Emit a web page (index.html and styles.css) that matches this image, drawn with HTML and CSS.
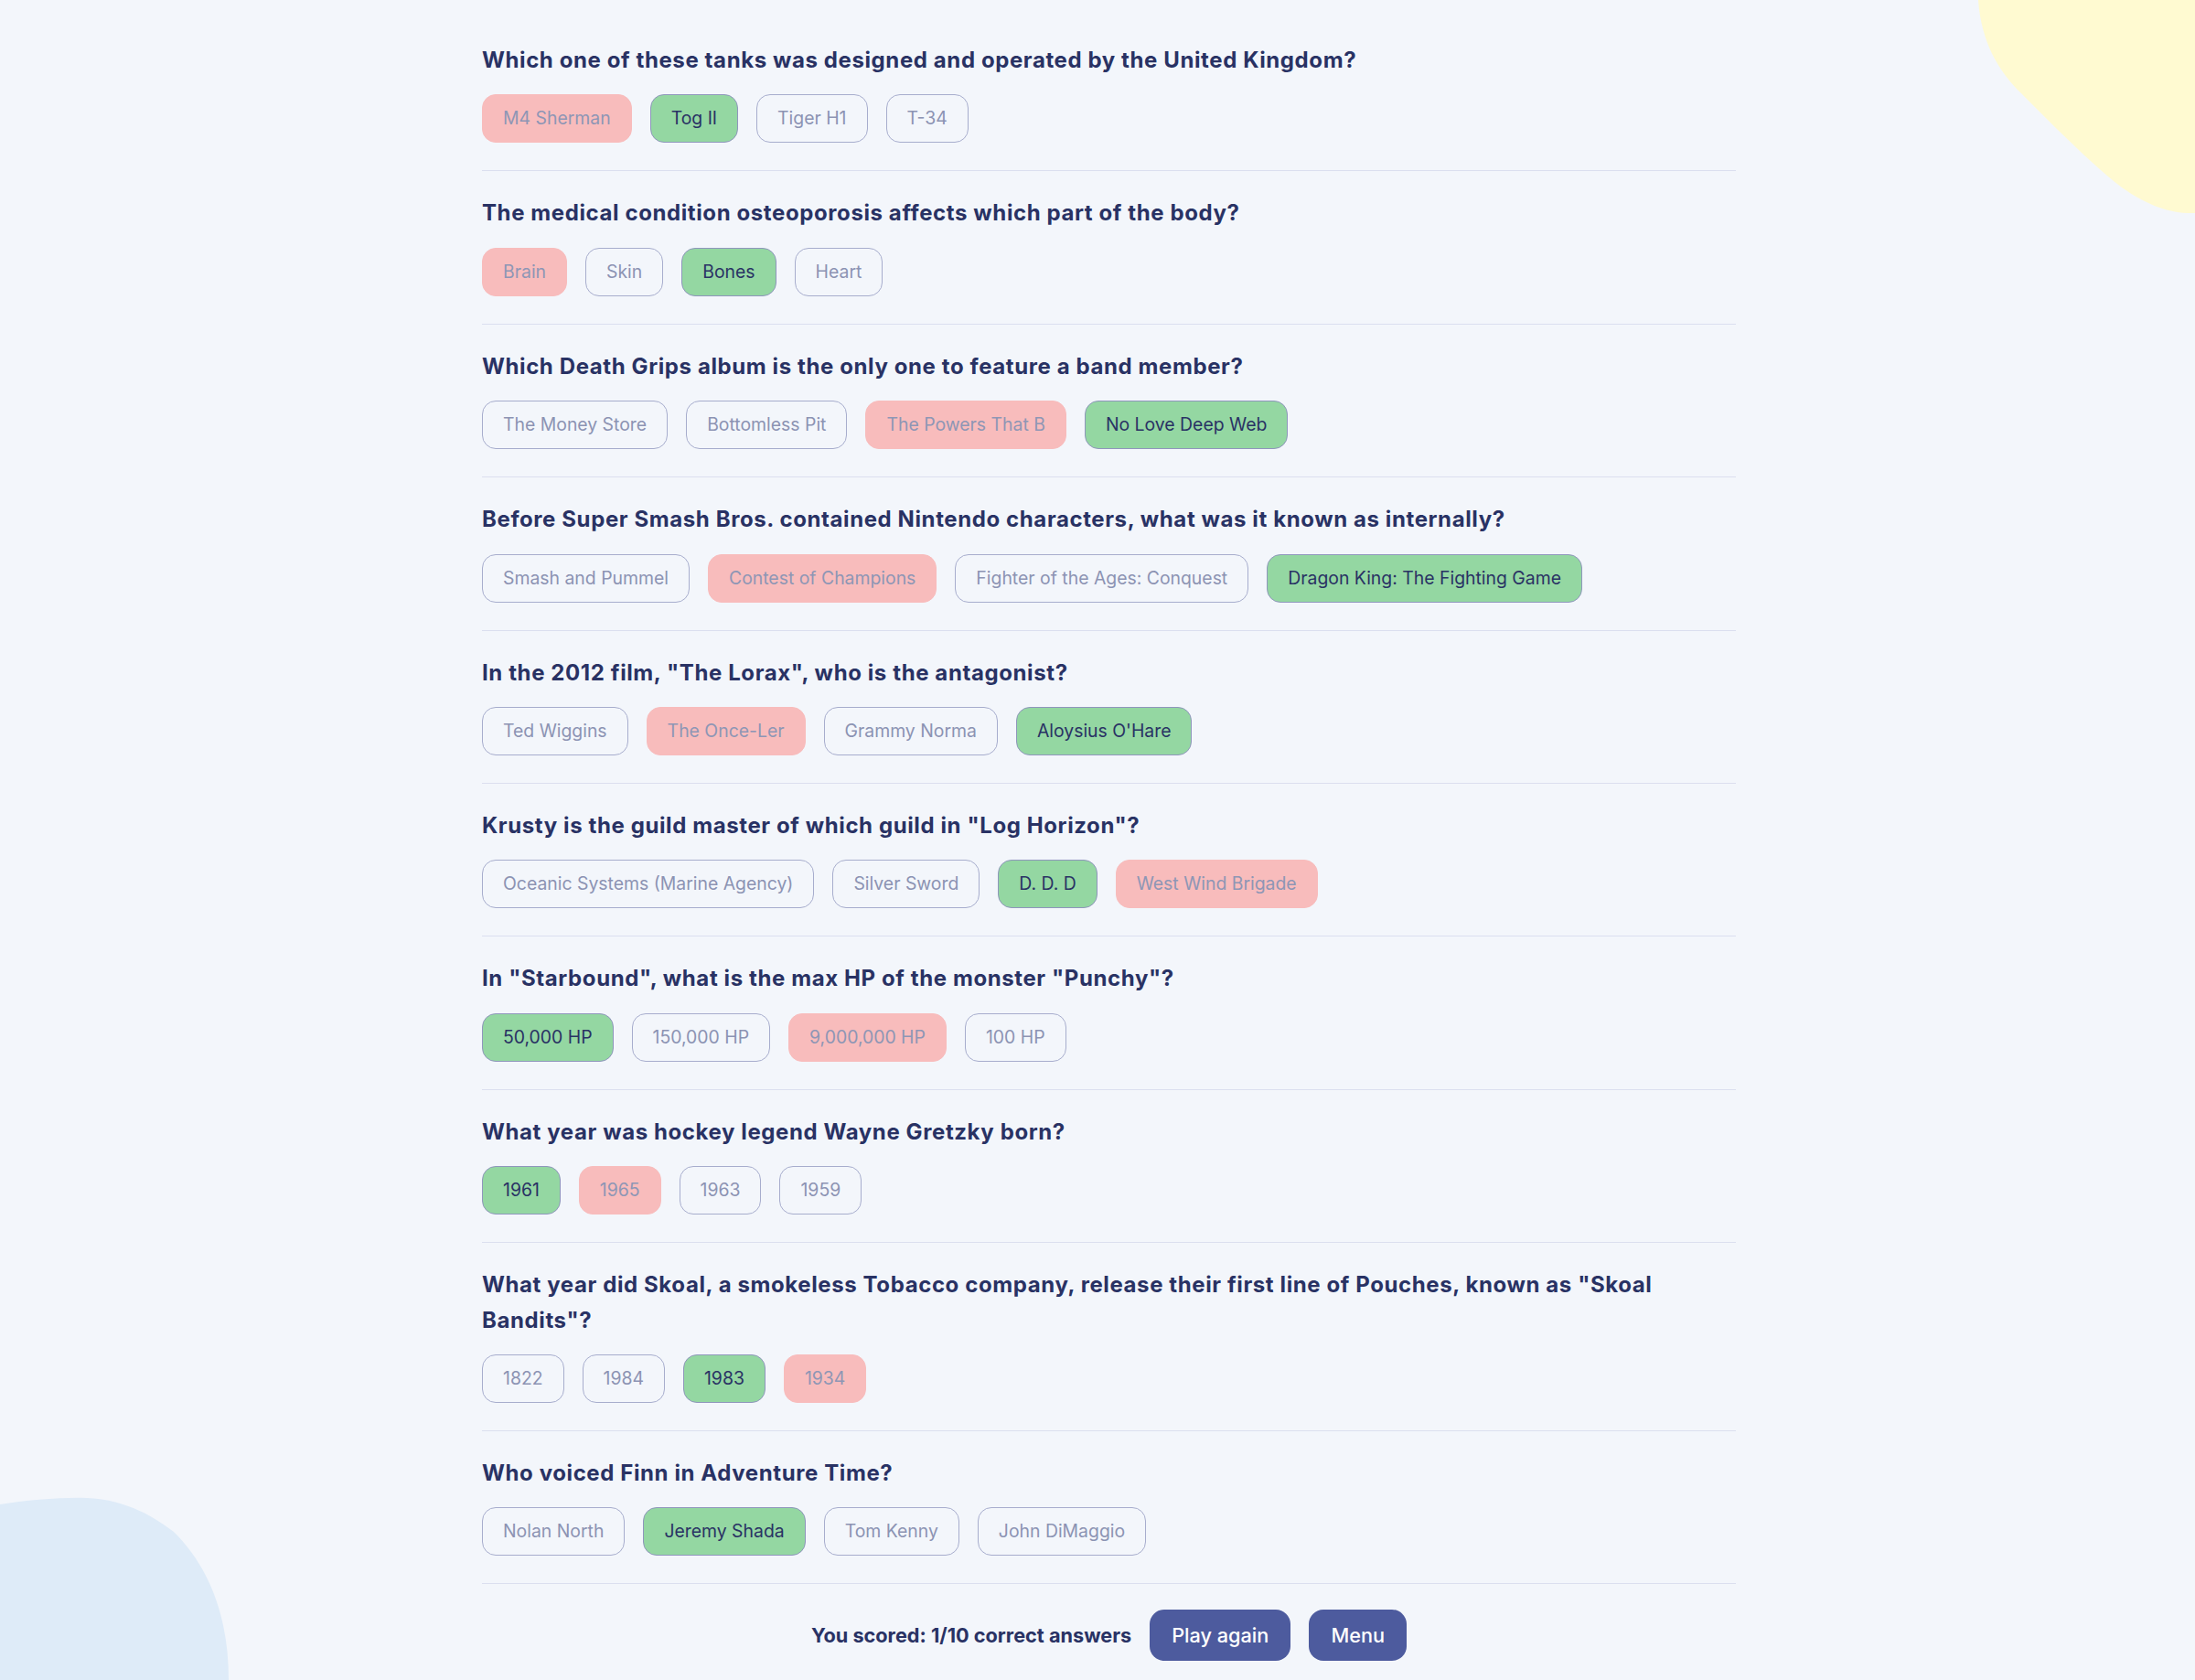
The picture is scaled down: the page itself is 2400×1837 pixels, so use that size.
FILE: index.html
```html
<!DOCTYPE html>
<html lang="en">
<head>
<meta charset="utf-8">
<title>Quizzical</title>
<link rel="stylesheet" href="styles.css">
</head>
<body>
<svg class="blob blob-yellow" width="240" height="240" viewBox="0 0 240 240" aria-hidden="true"><path d="M3 0 C6 45 25 78 50 102 C85 137 125 178 160 205 C190 226 215 234 240 233 L240 0 Z" fill="#FFFAD1"/></svg>
<svg class="blob blob-blue" width="260" height="207" viewBox="0 0 260 207" aria-hidden="true"><path d="M0 15 C30 10 70 7 95 8 C140 10 170 30 190 45 C230 85 250 140 250 207 L0 207 Z" fill="#DEEBF8"/></svg>
<div class="page">
<main class="quiz">
  <section class="question">
    <h2 class="q-text">Which one of these tanks was designed and operated by the United Kingdom?</h2>
    <div class="answers">
      <span class="answer wrong">M4 Sherman</span>
      <span class="answer correct">Tog II</span>
      <span class="answer">Tiger H1</span>
      <span class="answer">T-34</span>
    </div>
  </section>
  <section class="question">
    <h2 class="q-text">The medical condition osteoporosis affects which part of the body?</h2>
    <div class="answers">
      <span class="answer wrong">Brain</span>
      <span class="answer">Skin</span>
      <span class="answer correct">Bones</span>
      <span class="answer">Heart</span>
    </div>
  </section>
  <section class="question">
    <h2 class="q-text">Which Death Grips album is the only one to feature a band member?</h2>
    <div class="answers">
      <span class="answer">The Money Store</span>
      <span class="answer">Bottomless Pit</span>
      <span class="answer wrong">The Powers That B</span>
      <span class="answer correct">No Love Deep Web</span>
    </div>
  </section>
  <section class="question">
    <h2 class="q-text">Before Super Smash Bros. contained Nintendo characters, what was it known as internally?</h2>
    <div class="answers">
      <span class="answer">Smash and Pummel</span>
      <span class="answer wrong">Contest of Champions</span>
      <span class="answer">Fighter of the Ages: Conquest</span>
      <span class="answer correct">Dragon King: The Fighting Game</span>
    </div>
  </section>
  <section class="question">
    <h2 class="q-text">In the 2012 film, "The Lorax", who is the antagonist?</h2>
    <div class="answers">
      <span class="answer">Ted Wiggins</span>
      <span class="answer wrong">The Once-Ler</span>
      <span class="answer">Grammy Norma</span>
      <span class="answer correct">Aloysius O'Hare</span>
    </div>
  </section>
  <section class="question">
    <h2 class="q-text">Krusty is the guild master of which guild in "Log Horizon"?</h2>
    <div class="answers">
      <span class="answer">Oceanic Systems (Marine Agency)</span>
      <span class="answer">Silver Sword</span>
      <span class="answer correct">D. D. D</span>
      <span class="answer wrong">West Wind Brigade</span>
    </div>
  </section>
  <section class="question">
    <h2 class="q-text">In "Starbound", what is the max HP of the monster "Punchy"?</h2>
    <div class="answers">
      <span class="answer correct">50,000 HP</span>
      <span class="answer">150,000 HP</span>
      <span class="answer wrong">9,000,000 HP</span>
      <span class="answer">100 HP</span>
    </div>
  </section>
  <section class="question">
    <h2 class="q-text">What year was hockey legend Wayne Gretzky born?</h2>
    <div class="answers">
      <span class="answer correct">1961</span>
      <span class="answer wrong">1965</span>
      <span class="answer">1963</span>
      <span class="answer">1959</span>
    </div>
  </section>
  <section class="question">
    <h2 class="q-text">What year did Skoal, a smokeless Tobacco company, release their first line of Pouches, known as "Skoal Bandits"?</h2>
    <div class="answers">
      <span class="answer">1822</span>
      <span class="answer">1984</span>
      <span class="answer correct">1983</span>
      <span class="answer wrong">1934</span>
    </div>
  </section>
  <section class="question">
    <h2 class="q-text">Who voiced Finn in Adventure Time?</h2>
    <div class="answers">
      <span class="answer">Nolan North</span>
      <span class="answer correct">Jeremy Shada</span>
      <span class="answer">Tom Kenny</span>
      <span class="answer">John DiMaggio</span>
    </div>
  </section>
  <div class="score-row">
    <p class="score">You scored: 1/10 correct answers</p>
    <button class="btn">Play again</button>
    <button class="btn">Menu</button>
  </div>
</main>
</div>
</body>
</html>
```

FILE: styles.css
```css
html, body {
  margin: 0;
  padding: 0;
}

body {
  background: #F3F6FB;
  color: #293264;
  font-family: Inter, "Noto Sans", sans-serif;
  min-height: 100vh;
  overflow: hidden;
  position: relative;
}

.blob {
  position: absolute;
  z-index: 0;
  display: block;
}

.blob-yellow {
  top: 0;
  right: 0;
}

.blob-blue {
  left: 0;
  bottom: 0;
}

.page {
  position: relative;
  z-index: 1;
  padding-left: 25px;
}

.quiz {
  width: 1371px;
  margin: 0 auto;
  padding-top: 20px;
}

.question {
  padding: 27px 0 30px;
  border-bottom: 1px solid #DBDFEF;
}

.q-text {
  margin: 0 0 18px;
  font-family: Inter, "Noto Sans", sans-serif;
  font-weight: 700;
  font-size: 24px;
  line-height: 38.4px;
  color: #293264;
  letter-spacing: 0.6px;
}

.answers {
  display: flex;
  flex-wrap: wrap;
  gap: 20px;
}

.answer {
  display: inline-block;
  padding: 13px 22px;
  font-size: 19.4px;
  line-height: 25px;
  border: 1px solid #A7ADCD;
  border-radius: 15px;
  color: #8C93B3;
  background: transparent;
  white-space: nowrap;
}

.answer.correct {
  background: #94D7A2;
  border-color: #8F96BC;
  color: #293264;
}

.answer.wrong {
  background: #F8BCBC;
  border-color: #F8BCBC;
  color: #8E96B5;
}

.score-row {
  display: flex;
  justify-content: center;
  align-items: center;
  gap: 20px;
  margin-top: 28px;
  padding-bottom: 21px;
}

.score {
  margin: 0;
  font-size: 21.7px;
  font-weight: 700;
  color: #293264;
}

.btn {
  height: 56px;
  padding: 0 24px;
  border: none;
  border-radius: 16px;
  background: #4D5B9E;
  color: #FFFFFF;
  font-family: Inter, "Noto Sans", sans-serif;
  font-size: 21.7px;
  font-weight: 500;
}
```
